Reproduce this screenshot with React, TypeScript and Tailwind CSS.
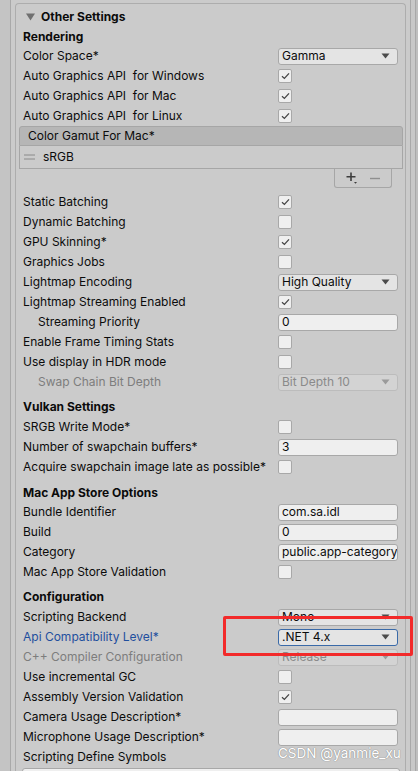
import React from "react"

const font = { fontFamily: "Inter, 'Noto Sans', sans-serif" }

function Check() {
  return (
    <svg width="9" height="8" viewBox="0 0 9 8" className="block">
      <path d="M1 4.2 L3.4 6.4 L8 1.4" fill="none" stroke="#454545" strokeWidth="1.3" />
    </svg>
  )
}

function Checkbox({ checked }: { checked?: boolean }) {
  return (
    <div className="w-[14px] h-[14px] rounded-[2px] border border-[#a8a8a8] bg-[#efefef] flex items-center justify-center">
      {checked && <Check />}
    </div>
  )
}

function Arrow({ disabled }: { disabled?: boolean }) {
  return (
    <svg width="9" height="6" viewBox="0 0 9 6" className="block">
      <path d="M0.5 0.5 L8.5 0.5 L4.5 5.5 Z" fill={disabled ? "#9a9a9a" : "#4b4b4b"} />
    </svg>
  )
}

function Dropdown({ value, disabled, focused }: { value: string; disabled?: boolean; focused?: boolean }) {
  return (
    <div
      className={`w-[120px] h-[17px] rounded-[3px] border flex items-center justify-between pl-[3px] pr-[7px] ${
        disabled
          ? "border-[#bcbcbc] bg-[#d3d3d3] text-[#8a8a8a]"
          : focused
          ? "border-[#3a6aa8] bg-[#e4e4e4] text-[#0c0c0c]"
          : "border-[#a8a8a8] bg-[#e4e4e4] text-[#0c0c0c]"
      }`}
    >
      <span className="leading-none">{value}</span>
      <Arrow disabled={disabled} />
    </div>
  )
}

function Field({ value }: { value?: string }) {
  return (
    <div className="w-[120px] h-[17px] rounded-[3px] border border-[#a8a8a8] bg-[#efefef] flex items-center pl-[3px] overflow-hidden whitespace-nowrap text-[#0c0c0c]">
      <span className="leading-none">{value}</span>
    </div>
  )
}

function Row({
  label,
  children,
  indent,
  disabled,
  blue,
}: {
  label: string
  children?: React.ReactNode
  indent?: boolean
  disabled?: boolean
  blue?: boolean
}) {
  const color = disabled ? "text-[#7d7d7d]" : blue ? "text-[#1f4f9e]" : "text-[#0b0b0b]"
  return (
    <div className="h-5 flex items-center">
      <div className={`w-[262px] shrink-0 whitespace-pre ${indent ? "pl-[22px]" : "pl-[7px]"} ${color}`}>
        {label}
      </div>
      {children}
    </div>
  )
}

function Header({ label, className = "" }: { label: string; className?: string }) {
  return <div className={`flex items-center pl-[7px] font-bold text-[#0b0b0b] ${className}`}>{label}</div>
}

export default function App() {
  return (
    <div className="relative flex h-[771px] w-[418px] overflow-hidden bg-[#cbcbcb] text-[12px]" style={font}>
      <div className="w-[11px] shrink-0 bg-[#c4c4c4] border-r border-[#a9a9a9]" />
      <div className="w-[4px] shrink-0" />

      {/* panel */}
      <div className="w-[391px] shrink-0 mt-[3px] border-l border-t border-r border-[#adadad] rounded-t-[4px] pt-[3px]">
        <div className="h-5 flex items-center pl-[10px] font-bold text-[#0b0b0b]">
          <svg width="9" height="8" viewBox="0 0 9 8" className="mr-[6px]">
            <path d="M0 0.5 L9 0.5 L4.5 7.5 Z" fill="#707070" />
          </svg>
          Other Settings
        </div>
        <Header label="Rendering" className="h-[19px]" />
        <Row label="Color Space*">
          <Dropdown value="Gamma" />
        </Row>
        <Row label="Auto Graphics API  for Windows">
          <Checkbox checked />
        </Row>
        <Row label="Auto Graphics API  for Mac">
          <Checkbox checked />
        </Row>
        <Row label="Auto Graphics API  for Linux">
          <Checkbox checked />
        </Row>

        {/* Color gamut list */}
        <div className="ml-[3px] w-[384px]">
          <div className="h-5 flex items-center pl-[8px] bg-[#b6b6b6] border border-[#a6a6a6] rounded-t-[3px] text-[#0b0b0b]">
            Color Gamut For Mac*
          </div>
          <div className="h-[23px] flex items-center border-x border-b border-[#a6a6a6] bg-[#cbcbcb] text-[#0b0b0b]">
            <svg width="11" height="6" viewBox="0 0 11 6" className="ml-[4px] mr-[8px]">
              <path d="M0 1 H11 M0 5 H11" stroke="#8a8a8a" strokeWidth="1" />
            </svg>
            sRGB
          </div>
          <div className="flex">
            <div className="w-[315px]" />
            <div className="w-[58px] h-[19px] border-x border-b border-[#a6a6a6] rounded-b-[3px] flex items-center pl-[11px] gap-[12px]">
              <svg width="12" height="12" viewBox="0 0 12 12" className="block">
                <path d="M5 0.5 V9 M0.5 4.8 H9.5" stroke="#3d3d3d" strokeWidth="1.6" />
                <path d="M8 10 L11 10 L9.5 11.8 Z" fill="#3d3d3d" />
              </svg>
              <svg width="10" height="3" viewBox="0 0 10 3">
                <path d="M0 1.5 H10" stroke="#8f8f8f" strokeWidth="1.4" />
              </svg>
            </div>
          </div>
        </div>

        <div className="h-[4px]" />
        <Row label="Static Batching">
          <Checkbox checked />
        </Row>
        <Row label="Dynamic Batching">
          <Checkbox />
        </Row>
        <Row label="GPU Skinning*">
          <Checkbox checked />
        </Row>
        <Row label="Graphics Jobs">
          <Checkbox />
        </Row>
        <Row label="Lightmap Encoding">
          <Dropdown value="High Quality" />
        </Row>
        <Row label="Lightmap Streaming Enabled">
          <Checkbox checked />
        </Row>
        <Row label="Streaming Priority" indent>
          <Field value="0" />
        </Row>
        <Row label="Enable Frame Timing Stats">
          <Checkbox />
        </Row>
        <Row label="Use display in HDR mode">
          <Checkbox />
        </Row>
        <Row label="Swap Chain Bit Depth" indent disabled>
          <Dropdown value="Bit Depth 10" disabled />
        </Row>

        <Header label="Vulkan Settings" className="h-5 mt-[5px]" />
        <Row label="SRGB Write Mode*">
          <Checkbox />
        </Row>
        <Row label="Number of swapchain buffers*">
          <Field value="3" />
        </Row>
        <Row label="Acquire swapchain image late as possible*">
          <Checkbox />
        </Row>

        <Header label="Mac App Store Options" className="h-[19px] mt-[6px]" />
        <Row label="Bundle Identifier">
          <Field value="com.sa.idl" />
        </Row>
        <Row label="Build">
          <Field value="0" />
        </Row>
        <Row label="Category">
          <Field value="public.app-category" />
        </Row>
        <Row label="Mac App Store Validation">
          <Checkbox />
        </Row>

        <Header label="Configuration" className="h-5 mt-[5px]" />
        <Row label="Scripting Backend">
          <Dropdown value="Mono" />
        </Row>
        <Row label="Api Compatibility Level*" blue>
          <Dropdown value=".NET 4.x" focused />
        </Row>
        <Row label="C++ Compiler Configuration" disabled>
          <Dropdown value="Release" disabled />
        </Row>
        <Row label="Use incremental GC">
          <Checkbox />
        </Row>
        <Row label="Assembly Version Validation">
          <Checkbox checked />
        </Row>
        <Row label="Camera Usage Description*">
          <Field />
        </Row>
        <Row label="Microphone Usage Description*">
          <Field />
        </Row>
        <Row label="Scripting Define Symbols" />
        <div className="ml-[6px] mt-px w-[378px] h-[17px] rounded-[3px] border border-[#a8a8a8] bg-[#efefef]" />
      </div>

      <div className="w-[4px] shrink-0" />
      <div className="w-px shrink-0 bg-[#a9a9a9]" />
      <div className="w-[4px] shrink-0 bg-[#c8c8c8]" />
      <div className="w-px shrink-0 bg-[#a9a9a9]" />
      <div className="flex-1 bg-[#bfbfbf]" />

      {/* annotation */}
      <div className="absolute left-[223px] top-[616px] w-[190px] h-[40px] border-[3px] border-[#f22a2a] rounded-[2px]" />
      <div
        className="absolute left-[278px] top-[743px] text-[13.5px] text-white whitespace-nowrap"
        style={{ textShadow: "0 0 1px #8a8a8a, 0 0 1px #8a8a8a" }}
      >
        CSDN @yanmie_xu
      </div>
    </div>
  )
}
